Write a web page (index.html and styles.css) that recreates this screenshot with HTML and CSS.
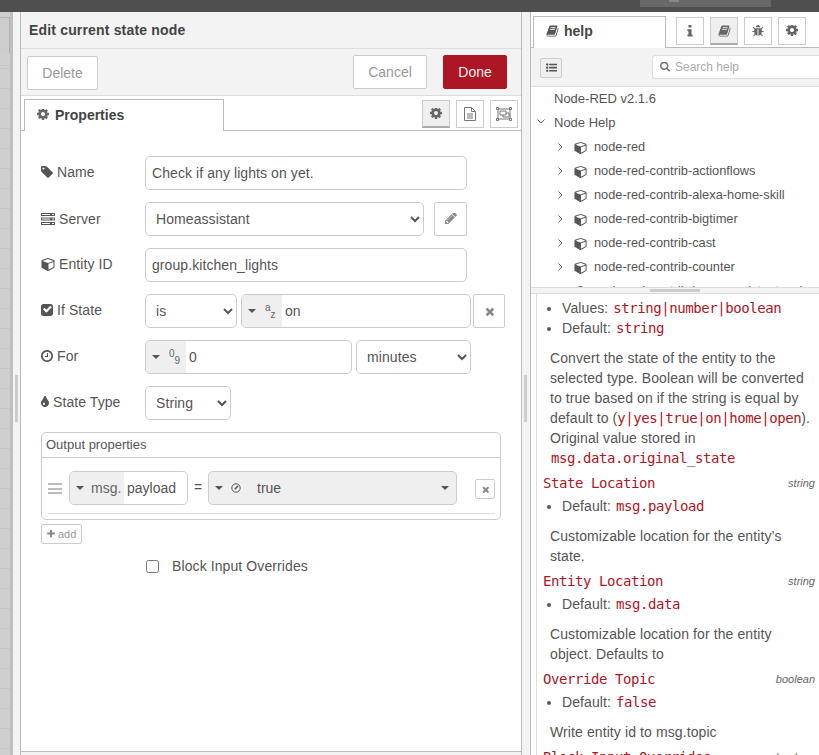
FILE: index.html
```html
<!DOCTYPE html>
<html lang="en">
<head>
<meta charset="utf-8">
<title>Edit current state node</title>
<link rel="stylesheet" href="styles.css">
</head>
<body>
<svg class="defs" aria-hidden="true">
  <symbol id="i-cog" viewBox="0 0 1536 1536"><path d="M1024 640q0-106-75-181t-181-75-181 75-75 181 75 181 181 75 181-75 75-181zm512-109v222q0 12-8 23t-20 13l-185 28q-19 54-39 91 35 50 107 138 10 12 10 25t-9 23q-27 37-99 108t-94 71q-12 0-26-9l-138-108q-44 23-91 38-16 136-29 186-7 28-36 28h-222q-14 0-24.500-8.500t-11.500-21.500l-28-184q-49-16-90-37l-141 107q-10 9-25 9-14 0-25-11-126-114-165-168-7-10-7-23 0-12 8-23 15-21 51-66.500t54-70.500q-27-50-41-99l-183-27q-13-2-21-12.500t-8-23.500v-222q0-12 8-23t19-13l186-28q14-46 39-92-40-57-107-138-10-12-10-24 0-10 9-23 26-36 98.500-107.500t94.500-71.500q13 0 26 10l138 107q44-23 91-38 16-136 29-186 7-28 36-28h222q14 0 24.500 8.500t11.500 21.500l28 184q49 16 90 37l142-107q9-9 24-9 13 0 25 10 129 119 165 170 7 8 7 22 0 12-8 23-15 21-51 66.500t-54 70.500q26 50 41 98l183 28q13 2 21 12.500t8 23.500z"/></symbol>
  <symbol id="i-tag" viewBox="0 0 1536 1536"><path d="M448 320q0-53-37.500-90.500t-90.500-37.500-90.500 37.500-37.500 90.500 37.500 90.500 90.500 37.500 90.500-37.500 37.500-90.500zm1067 576q0 53-37 90l-491 492q-39 37-91 37-53 0-90-37l-715-716q-38-37-64.500-101t-26.500-117v-416q0-52 38-90t90-38h416q53 0 117 26.500t102 64.500l715 714q37 39 37 91z"/></symbol>
  <symbol id="i-cube" viewBox="0 0 1792 1792"><path d="M896 1629l640-349v-636l-640 233v752zm-64-864l698-254-698-254-698 254zm832-252v768q0 35-18 65t-49 47l-704 384q-28 16-61 16t-61-16l-704-384q-31-17-49-47t-18-65v-768q0-40 23-73t61-50l704-256q22-8 44-8t44 8l704 256q38 17 61 50t23 73z" transform="translate(64 0)"/></symbol>
  <symbol id="i-check" viewBox="0 160 1536 1536"><path d="M733 1235l614-614q19-19 19-45t-19-45l-102-102q-19-19-45-19t-45 19l-467 467-211-211q-19-19-45-19t-45 19l-102 102q-19 19-19 45t19 45l358 358q19 19 45 19t45-19zm803-787v960q0 119-84.500 203.500t-203.500 84.500h-960q-119 0-203.500-84.500t-84.500-203.500v-960q0-119 84.500-203.500t203.500-84.500h960q119 0 203.500 84.500t84.500 203.500z" fill-rule="evenodd"/></symbol>
  <symbol id="i-clock" viewBox="0 128 1536 1536"><path d="M896 544v448q0 14-9 23t-23 9h-320q-14 0-23-9t-9-23v-64q0-14 9-23t23-9h224v-352q0-14 9-23t23-9h64q14 0 23 9t9 23zm416 352q0-148-73-273t-198-198-273-73-273 73-198 198-73 273 73 273 198 198 273 73 273-73 198-198 73-273zm224 0q0 209-103 385.500t-279.500 279.500-385.500 103-385.500-103-279.500-279.500-103-385.500 103-385.500 279.500-279.500 385.500-103 385.500 103 279.500 279.500 103 385.500z"/></symbol>
  <symbol id="i-tint" viewBox="0 128 1024 1536"><path d="M512 1152q0-36-20-69-1-1-15.500-22.500t-25.500-38-25-44-21-50.500q-4-16-21-16t-21 16q-7 23-21 50.500t-25 44-25.500 38-15.500 22.500q-20 33-20 69 0 53 37.500 90.500t90.500 37.500 90.500-37.500 37.500-90.500zm512-128q0 212-150 362t-362 150-362-150-150-362q0-145 81-275 6-9 62.500-90.500t101-151 99.500-178 83-201.500q9-30 34-47t51-17 51.500 17 33.500 47q28 93 83 201.500t99.500 178 101 151 62.500 90.500q81 127 81 275z" fill-rule="evenodd"/></symbol>
  <symbol id="i-pencil" viewBox="0 128 1536 1536"><path d="M363 1408l91-91-235-235-91 91v107h128v128h107zm523-928q0-22-22-22-10 0-17 7l-542 542q-7 7-7 17 0 22 22 22 10 0 17-7l542-542q7-7 7-17zm-54-192l416 416-832 832h-416v-416zm683 96q0 53-37 90l-166 166-416-416 166-165q36-38 90-38 53 0 91 38l235 234q37 39 37 91z"/></symbol>
  <symbol id="i-times" viewBox="182 240 1308 1308"><path d="M1490 1322q0 40-28 68l-136 136q-28 28-68 28t-68-28l-294-294-294 294q-28 28-68 28t-68-28l-136-136q-28-28-28-68t28-68l294-294-294-294q-28-28-28-68t28-68l136-136q28-28 68-28t68 28l294 294 294-294q28-28 68-28t68 28l136 136q28 28 28 68t-28 68l-294 294 294 294q28 28 28 68z"/></symbol>
  <symbol id="i-plus" viewBox="160 192 1472 1472"><path d="M1600 736v192q0 40-28 68t-68 28h-416v416q0 40-28 68t-68 28h-192q-40 0-68-28t-28-68v-416h-416q-40 0-68-28t-28-68v-192q0-40 28-68t68-28h416v-416q0-40 28-68t68-28h192q40 0 68 28t28 68v416h416q40 0 68 28t28 68z"/></symbol>
  <symbol id="i-book" viewBox="0 128 1792 1536"><path d="M1703 478q40 57 18 129l-275 906q-19 64-76.500 107.500t-122.500 43.500h-923q-77 0-148.500-53.500t-99.500-131.500q-24-67-2-127 0-4 3-27t4-37q1-8-3-21.500t-3-19.500q2-11 8-21t16.500-23.500 16.500-23.500q23-38 45-91.500t30-91.500q3-10 .5-30t-.5-28q3-11 17-28t17-23q21-36 42-92t25-90q1-9-2.500-32t.5-28q4-13 22-30.500t22-22.500q19-26 42.500-84.500t27.500-96.500q1-8-3-25.500t-2-26.500q2-8 9-18t18-23 17-21q8-12 16.500-30.500t15-35 16-36 19.500-32 26.500-23.500 36-11.500 47.500 5.500l-1 3q38-9 51-9h761q74 0 114 56t18 130l-274 906q-36 119-71.500 153.500t-128.500 34.500h-869q-27 0-38 15-11 16-1 43 24 70 144 70h923q29 0 56-15.500t35-41.500l300-987q7-22 5-57 38 15 59 43zm-1064 2q-4 13 2 22.500t20 9.500h608q13 0 25.500-9.500t16.500-22.500l21-64q4-13-2-22.500t-20-9.500h-608q-13 0-25.500 9.500t-16.500 22.500zm-83 256q-4 13 2 22.500t20 9.500h608q13 0 25.500-9.500t16.500-22.500l21-64q4-13-2-22.500t-20-9.500h-608q-13 0-25.500 9.500t-16.500 22.500z"/></symbol>
  <symbol id="i-info" viewBox="160 128 1472 1472"><path d="M1216 1344v128q0 26-19 45t-45 19h-512q-26 0-45-19t-19-45v-128q0-26 19-45t45-19h64v-384h-64q-26 0-45-19t-19-45v-128q0-26 19-45t45-19h384q26 0 45 19t19 45v576h64q26 0 45 19t19 45zm-128-1152v192q0 26-19 45t-45 19h-256q-26 0-45-19t-19-45v-192q0-26 19-45t45-19h256q26 0 45 19t19 45z"/></symbol>
  <symbol id="i-bug" viewBox="0 64 1664 1664"><path d="M1632 960q0 26-19 45t-45 19h-224q0 171-67 290l208 209q19 19 19 45t-19 45q-18 19-45 19t-45-19l-198-197q-5 5-15 13t-42 28.500-65 36.500-82 29-97 13v-896h-128v896q-51 0-101.500-13.500t-87-33-66-39-43.500-32.500l-15-14-183 207q-20 21-48 21-24 0-43-16-19-18-20.500-44.500t15.500-46.500l202-227q-58-114-58-274h-224q-26 0-45-19t-19-45 19-45 45-19h224v-294l-173-173q-19-19-19-45t19-45 45-19 45 19l173 173h844l173-173q19-19 45-19t45 19 19 45-19 45l-173 173v294h224q26 0 45 19t19 45zm-480-576h-640q0-133 93.500-226.500t226.500-93.500 226.500 93.500 93.500 226.500z"/></symbol>
  <symbol id="i-list" viewBox="0 128 1792 1536"><path d="M384 1344q0 80-56 136t-136 56-136-56-56-136 56-136 136-56 136 56 56 136zm0-512q0 80-56 136t-136 56-136-56-56-136 56-136 136-56 136 56 56 136zm1408 416v192q0 13-9.500 22.500t-22.500 9.500h-1216q-13 0-22.500-9.500t-9.500-22.500v-192q0-13 9.500-22.500t22.500-9.500h1216q13 0 22.500 9.500t9.500 22.500zm-1408-928q0 80-56 136t-136 56-136-56-56-136 56-136 136-56 136 56 56 136zm1408 416v192q0 13-9.500 22.500t-22.500 9.500h-1216q-13 0-22.500-9.500t-9.500-22.500v-192q0-13 9.500-22.500t22.500-9.500h1216q13 0 22.500 9.500t9.500 22.500zm0-512v192q0 13-9.500 22.500t-22.500 9.500h-1216q-13 0-22.500-9.500t-9.500-22.500v-192q0-13 9.500-22.500t22.500-9.500h1216q13 0 22.500 9.500t9.500 22.500z"/></symbol>
  <symbol id="i-search" viewBox="0 128 1664 1664"><path d="M1216 832q0-185-131.500-316.500t-316.500-131.500-316.500 131.500-131.500 316.500 131.500 316.500 316.500 131.500 316.500-131.500 131.500-316.500zm512 832q0 52-38 90t-90 38q-54 0-90-38l-343-342q-179 124-399 124-143 0-273.500-55.500t-225-150-150-225-55.500-273.500 55.500-273.500 150-225 225-150 273.500-55.500 273.500 55.500 225 150 150 225 55.500 273.500q0 220-124 399l343 343q37 37 37 90z" transform="translate(-64 -64)"/></symbol>
  <symbol id="i-server" viewBox="0 0 14 12"><path d="M0 0h14v3H0zM0 4.500h14v3H0zM0 9h14v3H0z"/><path fill="#fff" d="M1 1h8v1H1zM11 1h2v1h-2zM1 5.500h8v1H1zM11 5.500h2v1h-2zM1 10h8v1H1zM11 10h2v1h-2z"/></symbol>
</svg>

<div class="topbar"><div class="topbar-tool"><span class="topbar-mark"></span></div></div>

<div class="main">
  <div class="canvas"><div class="canvas-tab"></div></div>
  <div class="handle"><span class="grip"></span></div>

  <section class="tray">
    <h1 class="tray-title">Edit current state node</h1>
    <div class="tray-actions">
      <button class="btn btn-delete" type="button">Delete</button>
      <button class="btn btn-cancel" type="button">Cancel</button>
      <button class="btn btn-done" type="button">Done</button>
    </div>
    <div class="tray-tabs">
      <div class="tab"><svg class="ico ico-tab"><use href="#i-cog"/></svg>Properties</div>
      <div class="tab-tools">
        <span class="tool tool-on"><svg class="ico ico-tool"><use href="#i-cog"/></svg></span>
        <span class="tool">
          <svg class="line-ico" width="12" height="14" viewBox="0 0 12 14"><path d="M.5.5h7l4 4v9H.5zM7.500.5v4h4M3 7h6M3 9h6M3 11h6"/></svg>
        </span>
        <span class="tool">
          <svg class="line-ico" width="16" height="14" viewBox="0 0 16 14"><path d="M2 2h12v10H2zM4 4h6v4H4zM7 8v2h6V6h-3"/><path d="M.5.500h2v2h-2zM13.500.500h2v2h-2zM.5 11.500h2v2h-2zM13.500 11.500h2v2h-2z"/></svg>
        </span>
      </div>
    </div>

    <form class="form">
      <div class="row">
        <label class="lbl"><svg class="ico ico-lbl"><use href="#i-tag"/></svg>Name</label>
        <input class="field field-wide" type="text" value="Check if any lights on yet.">
      </div>
      <div class="row">
        <label class="lbl lbl-server"><svg class="ico ico-server"><use href="#i-server"/></svg>Server</label>
        <select class="sel sel-server"><option>Homeassistant</option></select>
        <span class="sq sq-edit"><svg class="ico ico-small"><use href="#i-pencil"/></svg></span>
      </div>
      <div class="row">
        <label class="lbl"><svg class="ico ico-lblcube"><use href="#i-cube"/></svg>Entity ID</label>
        <input class="field field-wide" type="text" value="group.kitchen_lights">
      </div>
      <div class="row">
        <label class="lbl"><svg class="ico ico-lbl"><use href="#i-check"/></svg>If State</label>
        <select class="sel sel-is"><option>is</option></select>
        <div class="typed typed-state">
          <span class="typed-left typed-left-az"><i class="caret"></i><span class="az"><span>a</span><span class="az-low">z</span></span></span>
          <span class="typed-val">on</span>
        </div>
        <span class="sq sq-x"><svg class="ico ico-x"><use href="#i-times"/></svg></span>
      </div>
      <div class="row">
        <label class="lbl"><svg class="ico ico-lbl"><use href="#i-clock"/></svg>For</label>
        <div class="typed typed-for">
          <span class="typed-left typed-left-09"><i class="caret"></i><span class="az"><span>0</span><span class="az-low">9</span></span></span>
          <span class="typed-val">0</span>
        </div>
        <select class="sel sel-min"><option>minutes</option></select>
      </div>
      <div class="row">
        <label class="lbl"><svg class="ico ico-tint"><use href="#i-tint"/></svg>State Type</label>
        <select class="sel sel-type"><option>String</option></select>
      </div>

      <div class="out">
        <div class="out-head">Output properties</div>
        <div class="out-body">
          <div class="out-row">
            <span class="drag"></span>
            <div class="typed typed-msg">
              <span class="typed-left typed-left-msg"><i class="caret"></i><span class="msg">msg.</span></span>
              <span class="typed-val">payload</span>
            </div>
            <span class="eq">=</span>
            <div class="typed-bool">
              <i class="caret"></i>
              <svg class="line-ico bool-ico" width="10" height="10" viewBox="0 0 10 10"><circle cx="5" cy="5" r="4.200"/><path class="needle" d="M3.800 6.200 7 3"/></svg>
              <span class="bool-val">true</span>
              <i class="caret caret-end"></i>
            </div>
            <span class="mini-x"><svg class="ico ico-minix"><use href="#i-times"/></svg></span>
          </div>
        </div>
      </div>
      <span class="add"><svg class="ico ico-plus"><use href="#i-plus"/></svg>add</span>
      <label class="block"><input class="chk" type="checkbox"><span>Block Input Overrides</span></label>
    </form>
    <div class="tray-foot"></div>
  </section>

  <div class="handle handle-right"><span class="grip"></span></div>

  <aside class="side">
    <div class="side-tabs">
      <div class="side-tab"><svg class="ico ico-sidetab"><use href="#i-book"/></svg>help</div>
      <div class="side-tools">
        <span class="tool"><svg class="ico ico-info"><use href="#i-info"/></svg></span>
        <span class="tool tool-on"><svg class="ico ico-bookt"><use href="#i-book"/></svg></span>
        <span class="tool"><svg class="ico ico-tool"><use href="#i-bug"/></svg></span>
        <span class="tool"><svg class="ico ico-tool"><use href="#i-cog"/></svg></span>
      </div>
    </div>
    <div class="side-bar">
      <span class="list-btn"><svg class="ico ico-list"><use href="#i-list"/></svg></span>
      <div class="search"><svg class="ico ico-search"><use href="#i-search"/></svg><span>Search help</span></div>
    </div>
    <ul class="tree">
      <li class="t1">Node-RED v2.1.6</li>
      <li class="t1"><svg class="chev chev-down" width="8" height="5" viewBox="0 0 8 5"><path d="M.5.5 4 4 7.500.5"/></svg>Node Help</li>
      <li class="t2"><svg class="chev" width="5" height="8" viewBox="0 0 5 8"><path d="M.5.5 4 4 .5 7.500"/></svg><svg class="ico ico-cube"><use href="#i-cube"/></svg>node-red</li>
      <li class="t2"><svg class="chev" width="5" height="8" viewBox="0 0 5 8"><path d="M.5.5 4 4 .5 7.500"/></svg><svg class="ico ico-cube"><use href="#i-cube"/></svg>node-red-contrib-actionflows</li>
      <li class="t2"><svg class="chev" width="5" height="8" viewBox="0 0 5 8"><path d="M.5.5 4 4 .5 7.500"/></svg><svg class="ico ico-cube"><use href="#i-cube"/></svg>node-red-contrib-alexa-home-skill</li>
      <li class="t2"><svg class="chev" width="5" height="8" viewBox="0 0 5 8"><path d="M.5.5 4 4 .5 7.500"/></svg><svg class="ico ico-cube"><use href="#i-cube"/></svg>node-red-contrib-bigtimer</li>
      <li class="t2"><svg class="chev" width="5" height="8" viewBox="0 0 5 8"><path d="M.5.5 4 4 .5 7.500"/></svg><svg class="ico ico-cube"><use href="#i-cube"/></svg>node-red-contrib-cast</li>
      <li class="t2"><svg class="chev" width="5" height="8" viewBox="0 0 5 8"><path d="M.5.5 4 4 .5 7.500"/></svg><svg class="ico ico-cube"><use href="#i-cube"/></svg>node-red-contrib-counter</li>
      <li class="t2"><svg class="chev" width="5" height="8" viewBox="0 0 5 8"><path d="M.5.5 4 4 .5 7.500"/></svg><svg class="ico ico-cube"><use href="#i-cube"/></svg>node-red-contrib-home-assistant-websocket</li>
    </ul>
    <div class="split"><span class="split-grip"></span></div>
    <div class="help">
      <ul class="help-list">
        <li>Values: <code>string|number|boolean</code></li>
        <li>Default: <code>string</code></li>
      </ul>
      <p>Convert the state of the entity to the selected type. Boolean will be converted to true based on if the string is equal by default to (<code class="code-tight">y|yes|true|on|home|open</code>). Original value stored in <code>msg.data.original_state</code></p>
      <h3><span>State Location</span><em>string</em></h3>
      <ul class="help-list"><li>Default: <code>msg.payload</code></li></ul>
      <p>Customizable location for the entity’s state.</p>
      <h3><span>Entity Location</span><em>string</em></h3>
      <ul class="help-list"><li>Default: <code>msg.data</code></li></ul>
      <p>Customizable location for the entity object. Defaults to</p>
      <h3><span>Override Topic</span><em>boolean</em></h3>
      <ul class="help-list"><li>Default: <code>false</code></li></ul>
      <p>Write entity id to msg.topic</p>
      <h3><span>Block Input Overrides</span><em>boolean</em></h3>
    </div>
  </aside>
</div>
</body>
</html>
```

FILE: styles.css
```css
* { box-sizing: border-box; }
html, body { margin: 0; padding: 0; height: 100%; overflow: hidden; }
body { font: 14px/20px "Liberation Sans", Arial, sans-serif; color: #555; background: #fff; }
.defs { display: none; }
.ico { fill: currentColor; display: inline-block; flex: none; }
.line-ico { fill: none; stroke: #777; stroke-width: 1; display: block; }

.topbar { height: 12px; background: #4f4f4f; display: flex; padding-left: 640px; }
.topbar-tool { width: 131px; height: 7px; background: #686868; padding-left: 29px; }
.topbar-mark { display: block; width: 10px; height: 2px; background: #888; }

.main { display: flex; height: 743px; }
.canvas { width: 13px; flex: none; background-color: #cfcfcf; background-image: repeating-linear-gradient(to bottom, #c6c6c6 0, #c6c6c6 1px, transparent 1px, transparent 20px); background-position: 0 56px; border-right: 3px solid #bfbfbf; }
.canvas-tab { height: 36px; margin-top: 5px; width: 10px; background: #cdcdcd; border-top: 1px solid #b2b2b2; border-right: 1px solid #b2b2b2; }
.handle { width: 7px; flex: none; background: #f3f3f3; padding: 363px 2px 0; }
.grip { display: block; width: 3px; height: 47px; background: #ccc; }
.handle-right { width: 8px; }

.tray { width: 502px; flex: none; border-left: 1px solid #bbb; border-right: 1px solid #bbb; display: flex; flex-direction: column; background: #fff; }
.tray-title { margin: 0; height: 37px; padding: 8px 8px 0 8px; font-size: 14px; line-height: 20px; font-weight: 700; letter-spacing: .17px; color: #444; background: #f3f3f3; border-bottom: 1px solid #ddd; }
.tray-actions { height: 47px; display: flex; align-items: flex-start; padding: 6px 14px 0 6px; background: #f3f3f3; border-bottom: 1px solid #ddd; }
.btn { height: 34px; font: 14px "Liberation Sans", Arial, sans-serif; border-radius: 2px; padding: 0; background: #fff; border: 1px solid #ccc; color: #999; }
.btn-delete { width: 71px; margin-top: 1px; margin-right: auto; }
.btn-cancel { width: 74px; margin-right: 16px; }
.btn-done { width: 64px; background: #ad1625; border-color: #ad1625; color: #eee; }

.tray-tabs { height: 35px; display: flex; justify-content: space-between; padding: 3px 3px 0 3px; border-bottom: 1px solid #bbb; }
.tab { width: 200px; height: 32px; border: 1px solid #bbb; border-bottom: none; background: #fff; font-weight: 700; color: #444; padding: 5px 0 0 12px; display: flex; align-items: flex-start; gap: 6px; margin-bottom: -1px; }
.ico-tab { width: 12px; height: 12px; margin-top: 4px; color: #666; }
.tab-tools, .side-tools { display: flex; gap: 6px; padding-top: 1px; }
.tool { width: 28px; height: 28px; border: 1px solid #ccc; background: #fff; display: flex; align-items: center; justify-content: center; color: #666; }
.tool-on { background: #efefef; border-bottom: 2px solid #aaa; }
.ico-tool { width: 12px; height: 12px; }

.form { flex: 1; padding: 25px 20px 0; overflow: hidden; }
.row { display: flex; align-items: flex-start; height: 34px; margin-bottom: 12px; }
.row > * { flex: none; }
.lbl { width: 104px; display: flex; align-items: center; height: 32px; gap: 4px; color: #555; letter-spacing: .08px; }
.lbl-server { height: 34px; }
.lbl .ico { color: #555; }
.ico-lbl { width: 12px; height: 12px; }
.ico-lblcube { width: 14px; height: 14px; }
.ico-tint { width: 8px; height: 12px; }
.ico-server { width: 14px; height: 12px; }
.field { height: 34px; border: 1px solid #ccc; border-radius: 5px; padding: 0 6px; font: 14px "Liberation Sans", Arial, sans-serif; letter-spacing: .08px; color: #555; background: #fff; outline: none; }
.field-wide { width: 322px; }
.sel { height: 34px; border: 1px solid #ccc; border-radius: 5px; padding: 0 6px; font: 14px "Liberation Sans", Arial, sans-serif; letter-spacing: .08px; color: #555; background: #fff; outline: none; }
.sel-server { width: 279px; }
.sel-is { width: 92px; }
.sel-min { width: 115px; margin-left: 4px; }
.sel-type { width: 86px; }
.sq { height: 34px; border: 1px solid #ccc; border-radius: 2px; display: flex; align-items: center; justify-content: center; color: #888; }
.sq-edit { width: 33px; margin-left: 10px; }
.ico-small { width: 12px; height: 12px; }
.sq-x { width: 32px; margin-left: 2px; }
.ico-x { width: 9px; height: 9px; }

.typed { height: 34px; display: flex; border: 1px solid #ccc; border-radius: 5px; overflow: hidden; background: #fff; align-items: stretch; }
.typed-state { width: 230px; margin-left: 4px; }
.typed-for { width: 207px; }
.typed-left { background: #efefef; display: flex; align-items: center; padding-left: 6px; color: #666; flex: none; }
.typed-left-az { width: 40px; }
.typed-left-09 { width: 40px; }
.typed-val { padding: 6px 0 0 3px; color: #555; line-height: 20px; }
.caret { display: block; width: 0; height: 0; border-left: 4px solid transparent; border-right: 4px solid transparent; border-top: 4px solid #555; flex: none; }
.az { margin-left: 9px; display: flex; font-size: 10px; line-height: 10px; width: 12px; }
.az-low { margin-top: 7px; }

.out { width: 460px; height: 88px; border: 1px solid #ccc; border-radius: 5px; }
.out-head { height: 25px; border-bottom: 1px solid #ccc; padding: 2px 4px 0; font-size: 13px; line-height: 20px; color: #555; }
.out-body { padding: 13px 5px 0 6px; }
.out-row { display: flex; align-items: flex-start; height: 43px; border-bottom: 1px solid #ddd; }
.drag { width: 14px; height: 11px; margin: 12px 7px 0 0; flex: none; border-top: 2px solid #bbb; border-bottom: 2px solid #bbb; background: linear-gradient(#bbb, #bbb) 0 50% / 100% 2px no-repeat; }
.typed-msg { width: 119px; flex: none; }
.typed-left-msg { width: 54px; }
.msg { margin-left: 7px; }
.eq { width: 20px; text-align: center; padding-top: 6px; flex: none; }
.typed-bool { width: 249px; height: 34px; flex: none; display: flex; align-items: center; padding-left: 6px; background: #efefef; border: 1px solid #ccc; border-radius: 5px; }
.bool-ico { margin-left: 8px; stroke: #555; }
.needle { stroke-width: 1.600; }
.bool-val { margin-left: 16px; flex: 1; }
.caret-end { margin-right: 7px; }
.mini-x { width: 20px; height: 20px; margin: 8px 0 0 18px; border: 1px solid #ccc; border-radius: 2px; display: flex; align-items: center; justify-content: center; color: #888; flex: none; }
.ico-minix { width: 7px; height: 7px; }

.add { display: flex; align-items: center; width: 41px; height: 20px; margin-top: 4px; border: 1px solid #ccc; border-radius: 2px; font-size: 11px; color: #999; padding-left: 5px; gap: 3px; }
.ico-plus { width: 8px; height: 8px; color: #888; }
.block { display: flex; align-items: center; gap: 13px; margin: 12px 0 0 105px; height: 20px; color: #555; letter-spacing: .1px; }
.chk { width: 13px; height: 13px; margin: 0; flex: none; }
.tray-foot { height: 4px; border-top: 1px solid #bbb; background: #f3f3f3; flex: none; }

.side { flex: 1; min-width: 0; border-left: 1px solid #bbb; display: flex; flex-direction: column; overflow: hidden; background: #fff; }
.side-tabs { height: 36px; display: flex; padding: 4px 0 0 2px; background: #fff; border-bottom: 1px solid #bbb; flex: none; }
.side-tab { width: 133px; height: 32px; border: 1px solid #bbb; border-bottom: none; font-weight: 700; color: #444; display: flex; align-items: flex-start; padding: 4px 0 0 12px; gap: 5px; font-size: 14px; margin-bottom: -1px; background: #fff; }
.ico-sidetab { width: 13px; height: 12px; margin-top: 4px; color: #555; }
.side-tools { padding: 1px 0 0 10px; }
.ico-info { width: 12px; height: 12px; }
.ico-bookt { width: 13px; height: 12px; }
.side-bar { height: 39px; background: #f3f3f3; border-bottom: 1px solid #ddd; display: flex; padding: 7px 0 0 9px; flex: none; }
.list-btn { width: 22px; height: 20px; margin-top: 3px; border: 1px solid #ccc; border-radius: 2px; background: #efefef; display: flex; align-items: center; justify-content: center; color: #555; flex: none; }
.ico-list { width: 11px; height: 10px; }
.search { margin-left: 90px; flex: 1; height: 24px; border: 1px solid #ddd; border-right: none; border-radius: 3px 0 0 3px; background: #fff; display: flex; align-items: center; padding-left: 7px; gap: 5px; color: #aaa; font-size: 12px; }
.ico-search { width: 10px; height: 10px; color: #777; }

.tree { list-style: none; margin: 0; padding: 0; height: 200px; overflow: hidden; font-size: 13px; color: #555; flex: none; }
.tree li { height: 24px; display: flex; align-items: center; white-space: nowrap; }
.t1 { padding-left: 23px; position: relative; }
.tree .t2 { padding-left: 27px; font-size: 12.800px; }
.chev { fill: none; stroke: #666; stroke-width: 1; flex: none; display: block; }
.chev-down { position: absolute; left: 6px; top: 8px; }
.t2 .chev { margin-right: 11px; }
.ico-cube { width: 13px; height: 13px; color: #555; margin-right: 7px; }

.split { height: 7px; background: #f3f3f3; border-top: 1px solid #ddd; border-bottom: 1px solid #ddd; display: flex; justify-content: center; flex: none; padding-top: 1px; }
.split-grip { width: 50px; height: 3px; background: #ccc; }
.help { flex: 1; margin-left: 5px; border-left: 1px solid #ddd; padding: 4px 4px 0 6px; overflow: hidden; color: #555; line-height: 20px; letter-spacing: .1px; }
.help-list { margin: 0; padding: 0 0 0 19px; }
.help-list code { padding-left: 1px; }
.help p { margin: 10px 0 0 7px; }
.help p code { padding-left: 1px; }
.help p .code-tight { padding: 0; }
.help code { font: 14px/1 "DejaVu Sans Mono", monospace; letter-spacing: -.43px; color: #ad1625; }
.help h3 { margin: 5px 0 3px; display: flex; justify-content: space-between; align-items: center; font: 14px/20px "DejaVu Sans Mono", monospace; letter-spacing: -.43px; color: #ad1625; }
.help h3 em { font: italic 11px/20px "Liberation Sans", Arial, sans-serif; letter-spacing: 0; color: #666; }
```
